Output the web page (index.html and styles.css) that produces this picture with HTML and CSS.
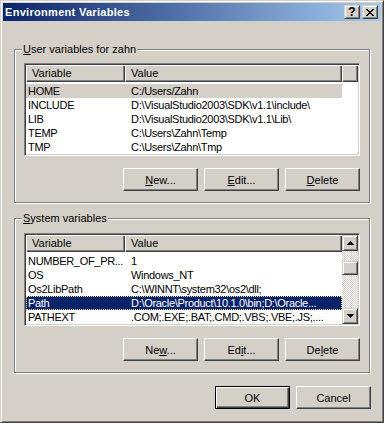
FILE: index.html
```html
<!DOCTYPE html>
<html>
  <head>
    <meta charset="utf-8">
    <title>Environment Variables</title>
    <link rel="stylesheet" href="styles.css">
  </head>
  <body>
    <div class="window">
      <div class="titlebar">
        <span class="title">Environment Variables</span>
        <div class="caption-buttons">
          <span class="cap-btn help">?</span>
          <span class="cap-btn close">
            <svg width="8" height="7" viewBox="0 0 8 7" shape-rendering="crispEdges">
              <path d="M0 0h2v1H0z M6 0h2v1H6z M1 1h2v1H1z M5 1h2v1H5z M2 2h4v1H2z M3 3h2v1H3z M2 4h4v1H2z M1 5h2v1H1z M5 5h2v1H5z M0 6h2v1H0z M6 6h2v1H6z" fill="#000"/>
            </svg>
          </span>
        </div>
      </div>

      <div class="client">
        <!-- user variables -->
        <div class="group user-group">
          <span class="group-label"><u>U</u>ser variables for zahn</span>
          <div class="listview">
            <div class="list-main">
              <div class="list-head">
                <div class="head-cell col-name">Variable</div>
                <div class="head-cell col-value">Value</div>
                <div class="head-cell head-fill"></div>
              </div>
              <div class="list-rows">
                <div class="row selected-inactive"><span class="cell col-name">HOME</span><span class="cell col-value">C:/Users/Zahn</span></div>
                <div class="row"><span class="cell col-name">INCLUDE</span><span class="cell col-value">D:\VisualStudio2003\SDK\v1.1\include\</span></div>
                <div class="row"><span class="cell col-name">LIB</span><span class="cell col-value">D:\VisualStudio2003\SDK\v1.1\Lib\</span></div>
                <div class="row"><span class="cell col-name">TEMP</span><span class="cell col-value">C:\Users\Zahn\Temp</span></div>
                <div class="row"><span class="cell col-name">TMP</span><span class="cell col-value">C:\Users\Zahn\Tmp</span></div>
              </div>
            </div>
          </div>
          <div class="button-row">
            <button class="btn"><u>N</u>ew...</button>
            <button class="btn"><u>E</u>dit...</button>
            <button class="btn"><u>D</u>elete</button>
          </div>
        </div>

        <!-- system variables -->
        <div class="group system-group">
          <span class="group-label"><u>S</u>ystem variables</span>
          <div class="listview">
            <div class="list-main">
              <div class="list-head">
                <div class="head-cell col-name">Variable</div>
                <div class="head-cell col-value">Value</div>
              </div>
              <div class="list-rows">
                <div class="row"><span class="cell col-name">NUMBER_OF_PR...</span><span class="cell col-value">1</span></div>
                <div class="row"><span class="cell col-name">OS</span><span class="cell col-value">Windows_NT</span></div>
                <div class="row"><span class="cell col-name">Os2LibPath</span><span class="cell col-value">C:\WINNT\system32\os2\dll;</span></div>
                <div class="row selected"><span class="cell col-name">Path</span><span class="cell col-value">D:\Oracle\Product\10.1.0\bin;D:\Oracle...</span></div>
                <div class="row"><span class="cell col-name">PATHEXT</span><span class="cell col-value">.COM;.EXE;.BAT;.CMD;.VBS;.VBE;.JS;....</span></div>
              </div>
            </div>
            <div class="scrollbar">
              <span class="sb-btn">
                <svg width="7" height="4" viewBox="0 0 7 4" shape-rendering="crispEdges">
                  <path d="M3 0h1v1H3z M2 1h3v1H2z M1 2h5v1H1z M0 3h7v1H0z" fill="#000"/>
                </svg>
              </span>
              <div class="sb-track">
                <span class="sb-thumb"></span>
              </div>
              <span class="sb-btn">
                <svg width="7" height="4" viewBox="0 0 7 4" shape-rendering="crispEdges">
                  <path d="M0 0h7v1H0z M1 1h5v1H1z M2 2h3v1H2z M3 3h1v1H3z" fill="#000"/>
                </svg>
              </span>
            </div>
          </div>
          <div class="button-row">
            <button class="btn">Ne<u>w</u>...</button>
            <button class="btn">Ed<u>i</u>t...</button>
            <button class="btn">De<u>l</u>ete</button>
          </div>
        </div>

        <div class="dialog-buttons">
          <button class="btn default">OK</button>
          <button class="btn">Cancel</button>
        </div>
      </div>
    </div>
  </body>
</html>
```

FILE: styles.css
```css
html, body {
  margin: 0;
  background-color: #d4d0c8;
}
body {
  font-family: "Liberation Sans", Arial, sans-serif;
  font-size: 11px;
  color: #000;
}
.window {
  box-sizing: border-box;
  width: 384px;
  height: 423px;
  padding: 2px;
  border: 1px solid;
  border-color: #d4d0c8 #404040 #404040 #d4d0c8;
  box-shadow: inset 1px 1px 0 #fff, inset -1px -1px 0 #808080;
  background-color: #d4d0c8;
}
.titlebar {
  height: 18px;
  display: flex;
  align-items: center;
  justify-content: space-between;
  padding: 0 3px 0 2px;
  background: linear-gradient(to right, #0a246a, #a6caf0);
}
.title {
  color: #fff;
  font-weight: bold;
  font-size: 11px;
  line-height: 18px;
  letter-spacing: 0.3px;
  white-space: nowrap;
}
.caption-buttons {
  display: flex;
  gap: 2px;
}
.cap-btn {
  box-sizing: border-box;
  width: 16px;
  height: 14px;
  display: flex;
  align-items: center;
  justify-content: center;
  background-color: #d4d0c8;
  border: 1px solid;
  border-color: #d4d0c8 #404040 #404040 #d4d0c8;
  box-shadow: inset 1px 1px 0 #fff, inset -1px -1px 0 #808080;
}
.cap-btn.help {
  font-weight: bold;
  font-size: 12px;
  line-height: 12px;
}
.cap-btn.close svg {
  display: block;
}
.client {
  padding: 0 11px;
}
.group {
  position: relative;
  box-sizing: border-box;
  width: 356px;
  border: 1px solid #808080;
  box-shadow: inset 1px 1px 0 #fff, 1px 1px 0 #fff;
  padding: 13px 9px 11px 9px;
}
.user-group {
  margin-top: 28px;
}
.system-group {
  margin-top: 15px;
  padding-top: 14px;
}
.group-label {
  position: absolute;
  left: 7px;
  top: -7px;
  padding: 0 1px;
  line-height: 13px;
  background-color: #d4d0c8;
  white-space: nowrap;
}
.listview {
  box-sizing: border-box;
  height: 93px;
  display: flex;
  background-color: #fff;
  border: 1px solid;
  border-color: #808080 #fff #fff #808080;
  box-shadow: inset 1px 1px 0 #404040, inset -1px -1px 0 #d4d0c8;
  padding: 1px;
  overflow: hidden;
}
.list-main {
  flex: 1;
  min-width: 0;
}
.list-head {
  display: flex;
  height: 17px;
}
.head-cell {
  box-sizing: border-box;
  height: 17px;
  line-height: 16px;
  background-color: #d4d0c8;
  box-shadow: inset 1px 1px 0 #fff, inset -1px -1px 0 #404040, inset -2px -2px 0 #808080;
  padding-left: 6px;
  white-space: nowrap;
}
.head-cell.col-name {
  width: 99px;
}
.head-cell.col-value {
  width: 217px;
}
.head-fill {
  flex: 1;
}
.list-rows {
  padding-top: 2px;
}
.row {
  display: flex;
  width: 316px;
  height: 14px;
  line-height: 14px;
  letter-spacing: -0.3px;
  box-sizing: border-box;
}
.cell {
  overflow: hidden;
  white-space: nowrap;
  box-sizing: border-box;
}
.cell.col-name {
  width: 99px;
  padding-left: 2px;
}
.cell.col-value {
  width: 217px;
  padding-left: 6px;
}
.row.selected-inactive {
  background-color: #d4d0c8;
}
.row.selected {
  background-color: #0a246a;
  color: #fff;
  outline: 1px dotted #f5db95;
  outline-offset: -1px;
}
.scrollbar {
  width: 16px;
  display: flex;
  flex-direction: column;
}
.sb-btn {
  box-sizing: border-box;
  width: 16px;
  height: 16px;
  display: flex;
  align-items: center;
  justify-content: center;
  background-color: #d4d0c8;
  border: 1px solid;
  border-color: #d4d0c8 #404040 #404040 #d4d0c8;
  box-shadow: inset 1px 1px 0 #fff, inset -1px -1px 0 #808080;
}
.sb-btn svg {
  display: block;
}
.sb-track {
  flex: 1;
  background-color: #fff;
  background-image: conic-gradient(#d4d0c8 25%, #fff 0 50%, #d4d0c8 0 75%, #fff 0);
  background-size: 2px 2px;
}
.sb-thumb {
  display: block;
  box-sizing: border-box;
  height: 14px;
  margin-top: 10px;
  background-color: #d4d0c8;
  border: 1px solid;
  border-color: #d4d0c8 #404040 #404040 #d4d0c8;
  box-shadow: inset 1px 1px 0 #fff, inset -1px -1px 0 #808080;
}
.button-row {
  display: flex;
  justify-content: flex-end;
  gap: 6px;
  margin-top: 12px;
}
.btn {
  box-sizing: border-box;
  width: 75px;
  height: 23px;
  padding: 0;
  font-family: "Liberation Sans", Arial, sans-serif;
  font-size: 11px;
  color: #000;
  background-color: #d4d0c8;
  border: 1px solid;
  border-color: #fff #404040 #404040 #fff;
  box-shadow: inset -1px -1px 0 #808080;
  border-radius: 0;
}
.btn.default {
  border-color: #000;
  box-shadow: inset 1px 1px 0 #fff, inset -1px -1px 0 #404040, inset -2px -2px 0 #808080;
}
.dialog-buttons {
  width: 357px;
  display: flex;
  justify-content: flex-end;
  gap: 6px;
  margin-top: 13px;
}
```
